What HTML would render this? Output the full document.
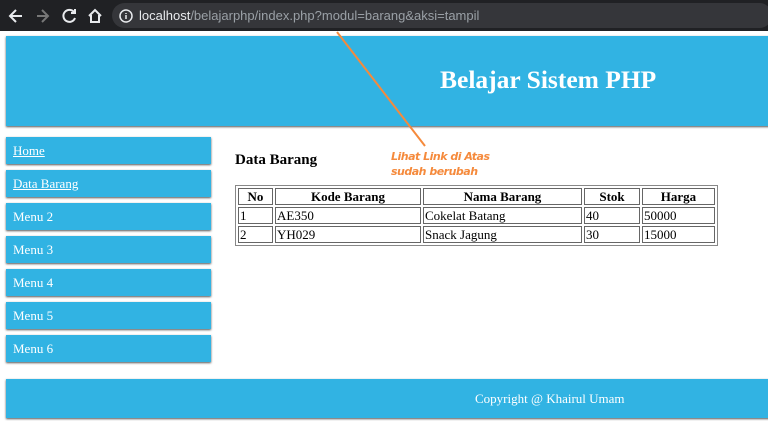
<!DOCTYPE html>
<html><head><meta charset="utf-8"><style>
body{margin:0;width:768px;height:421px;background:#fff;position:relative;overflow:hidden;font-family:"Liberation Serif",serif;}
.bar{position:absolute;left:0;top:0;width:768px;height:31px;background:#202124;}
.url{position:absolute;left:112px;top:3px;width:660px;height:25px;background:#35363a;border-radius:13px;}
.urltxt{position:absolute;left:139px;top:8px;font:13px "Liberation Sans",sans-serif;color:#9aa0a6;}
.urltxt b{font-weight:normal;color:#e8eaed;}
.blue{position:absolute;background:#31b3e3;box-shadow:0 1px 2px #555;}
.menu{left:6px;width:205px;height:27px;color:#fff;font-size:13px;line-height:27px;padding-left:7px;box-sizing:border-box;}
.menu u{text-decoration:underline;}
table{position:absolute;left:235px;top:185px;border:1px solid #888;border-spacing:2px;font-size:13px;}
td,th{border:1px solid #666;padding:0 1px;height:15px;line-height:15px;}
th{text-align:center}
</style></head><body>
<div class="bar">
<svg width="110" height="31" style="position:absolute;left:0;top:0" fill="none" stroke-width="2">
<path d="M22 16H11M16 10l-6 6 6 6" stroke="#e8eaed"/>
<path d="M37 16h11M42 10l6 6-6 6" stroke="#777"/>
<path d="M74 12a6 6 0 1 0 1 6" stroke="#e8eaed"/><path d="M75 9v4h-4" stroke="#e8eaed"/>
<path d="M89 16l6-6 6 6M91 15v7h8v-7" stroke="#e8eaed"/>
</svg>
<div class="url"></div>
<svg width="16" height="16" style="position:absolute;left:118px;top:8px"><circle cx="8" cy="8" r="6" fill="none" stroke="#e8eaed" stroke-width="1.5"/><path d="M8 7v4M8 5v1" stroke="#e8eaed" stroke-width="1.5"/></svg>
<div class="urltxt"><b>localhost</b>/belajarphp/index.php?modul=barang&amp;aksi=tampil</div>
</div>
<div class="blue" style="left:6px;top:36px;width:770px;height:90px"></div>
<div style="position:absolute;left:440px;top:65px;color:#fff;font-size:25.5px;font-weight:bold">Belajar Sistem PHP</div>
<div class="blue menu" style="top:137px"><u>Home</u></div>
<div class="blue menu" style="top:170px"><u>Data Barang</u></div>
<div class="blue menu" style="top:203px">Menu 2</div>
<div class="blue menu" style="top:236px">Menu 3</div>
<div class="blue menu" style="top:269px">Menu 4</div>
<div class="blue menu" style="top:302px">Menu 5</div>
<div class="blue menu" style="top:335px">Menu 6</div>
<div class="blue" style="left:6px;top:379px;width:770px;height:39px"></div>
<div style="position:absolute;left:475px;top:391px;color:#fff;font-size:13px">Copyright @ Khairul Umam</div>
<div style="position:absolute;left:235px;top:152px;font-size:15px;font-weight:bold">Data Barang</div>
<div style="position:absolute;left:391px;top:149px;color:#f58a3c;font:italic bold 11px/15px 'DejaVu Sans','Liberation Sans',sans-serif;letter-spacing:-0.5px">Lihat Link di Atas<br>sudah berubah</div>
<svg width="768" height="421" style="position:absolute;left:0;top:0"><path d="M337 32L425 146" stroke="#f58a3c" stroke-width="2"/></svg>
<table>
<tr><th style="width:31px">No</th><th style="width:142px">Kode Barang</th><th style="width:155px">Nama Barang</th><th style="width:52px">Stok</th><th style="width:69px">Harga</th></tr>
<tr><td>1</td><td>AE350</td><td>Cokelat Batang</td><td>40</td><td>50000</td></tr>
<tr><td>2</td><td>YH029</td><td>Snack Jagung</td><td>30</td><td>15000</td></tr>
</table>
</body></html>
